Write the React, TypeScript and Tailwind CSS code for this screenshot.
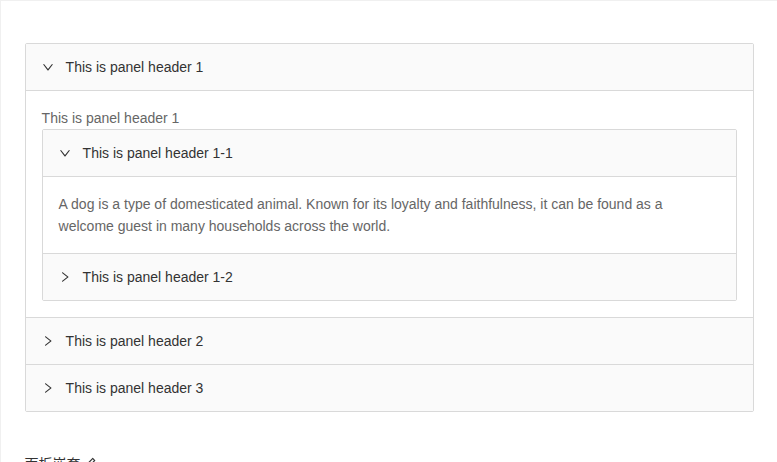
const rightArrow =
  'M765.7 486.8L314.9 134.7A7.97 7.97 0 00302 141v77.3c0 4.9 2.3 9.6 6.1 12.6l360 281.1-360 281.1c-3.9 3-6.1 7.7-6.1 12.6V883c0 6.6 7.6 10.3 12.9 6.3l450.8-352.1a31.96 31.96 0 000-50.4z';
const editIcon =
  'M257.7 752c2 0 4-.2 6-.5L431.9 722c2-.4 3.9-1.3 5.3-2.8l423.9-423.9a9.96 9.96 0 000-14.1L694.9 114.9c-1.9-1.9-4.4-2.9-7.1-2.9s-5.2 1-7.1 2.9L256.8 538.8c-1.5 1.5-2.4 3.3-2.8 5.3l-29.5 168.2a33.5 33.5 0 009.4 29.8c6.6 6.4 14.9 9.9 23.8 9.9zm67.4-174.4L687.8 215l73.3 73.3-362.7 362.6-88.9 15.7 15.6-89zM880 836H144c-17.7 0-32 14.3-32 32v36c0 4.4 3.6 8 8 8h784c4.4 0 8-3.6 8-8v-36c0-17.7-14.3-32-32-32z';

function Arrow({ open }: { open?: boolean }) {
  return (
    <svg
      viewBox="64 64 896 896"
      width="12"
      height="12"
      fill="currentColor"
      className={open ? 'rotate-90 shrink-0 text-[#333333]' : 'shrink-0 text-[#333333]'}
    >
      <path d={rightArrow} />
    </svg>
  );
}

function Header({ title, open, last }: { title: string; open?: boolean; last?: boolean }) {
  return (
    <div
      className={`flex items-center gap-3 px-4 py-3 bg-[#fafafa] text-[#333333] ${
        last ? 'h-[46px]' : 'h-[47px] border-b border-[#d9d9d9]'
      }`}
    >
      <Arrow open={open} />
      <span>{title}</span>
    </div>
  );
}

export default function App() {
  return (
    <div className="h-[462px] overflow-hidden bg-white font-['Liberation_Sans','Noto_Sans_CJK_SC',sans-serif] text-sm leading-[22px] text-[#666666]">
      <div className="ml-[-0.4px] border-t border-l border-[#f0f0f0] pt-[42px] pl-6 pr-[23px]">
        <div className="rounded-[2px] border border-[#d9d9d9]">
          <Header title="This is panel header 1" open />
          <div className="p-4 border-b border-[#d9d9d9]">
            <div>This is panel header 1</div>
            <div className="rounded-[2px] border border-[#d9d9d9]">
              <Header title="This is panel header 1-1" open />
              <div className="p-4 border-b border-[#d9d9d9]">
                A dog is a type of domesticated animal. Known for its loyalty and faithfulness, it can be found as a
                welcome guest in many households across the world.
              </div>
              <Header title="This is panel header 1-2" last />
            </div>
          </div>
          <Header title="This is panel header 2" />
          <Header title="This is panel header 3" last />
        </div>
        <div className="mt-[41px] flex items-center gap-0.5 text-[#333333]">
          <span>面板嵌套</span>
          <svg viewBox="64 64 896 896" width="14" height="14" fill="currentColor" className="shrink-0">
            <path d={editIcon} />
          </svg>
        </div>
      </div>
    </div>
  );
}
